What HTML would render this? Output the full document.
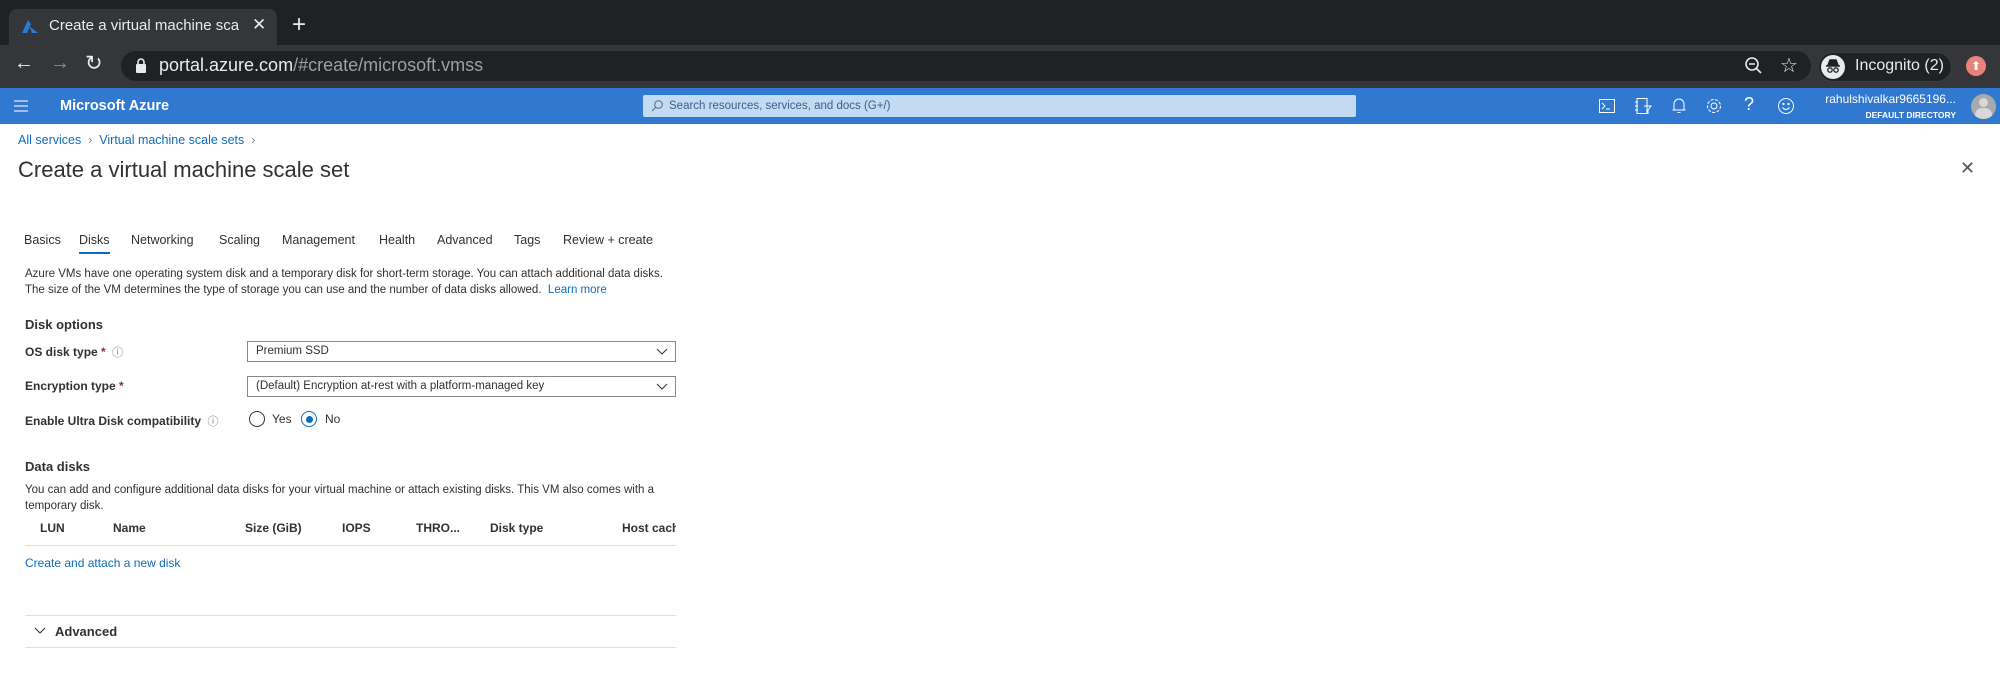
<!DOCTYPE html>
<html><head><meta charset="utf-8"><style>
*{margin:0;padding:0;box-sizing:border-box}
body{width:2000px;height:697px;overflow:hidden;background:#fff;font-family:"Liberation Sans",sans-serif;position:relative;color:#323130}
.a{position:absolute;white-space:nowrap}
.t{font-size:12px;line-height:14px}
.lbl{font-size:12px;font-weight:bold;color:#323130}
.blue{color:#0f6cbd}
.dd{position:absolute;left:247px;width:429px;height:21px;border:1px solid #8a8886;font-size:11.5px;padding:0 8px;line-height:19px}
.dd svg{position:absolute;right:7px;top:6px}
.hic{position:absolute;top:97px}
.line{position:absolute;left:25px;width:651px;height:1px;background:#e1dfdd}
</style></head><body>
<!-- chrome -->
<div class="a" style="left:0;top:0;width:2000px;height:45px;background:#202124"></div>
<div class="a" style="left:9px;top:9px;width:268px;height:38px;background:#35363a;border-radius:8px 8px 0 0"></div>
<svg class="a" style="left:22px;top:20px" width="16" height="14"><path d="M6 0L0 13h5L9 4z M7 6l3 7h6z" fill="#2a7bd6"/></svg>
<div class="a" style="left:49px;top:17px;font-size:15px;color:#e8eaed;width:190px;overflow:hidden">Create a virtual machine scale set</div>
<div class="a" style="left:252px;top:15px;font-size:17px;color:#e8eaed">✕</div>
<div class="a" style="left:292px;top:11px;font-size:24px;color:#e8eaed">+</div>
<div class="a" style="left:0;top:45px;width:2000px;height:43px;background:#35363a"></div>
<div class="a" style="left:14px;top:52px;font-size:20px;color:#e8eaed">←</div>
<div class="a" style="left:50px;top:52px;font-size:20px;color:#8a8b8d">→</div>
<div class="a" style="left:85px;top:51px;font-size:21px;color:#e8eaed">↻</div>
<div class="a" style="left:121px;top:51px;width:1690px;height:30px;background:#202124;border-radius:15px"></div>
<svg class="a" style="left:135px;top:58px" width="12" height="15"><rect x="1" y="6" width="10" height="9" rx="1" fill="#e8eaed"/><path d="M3 7V4a3 3 0 0 1 6 0v3" stroke="#e8eaed" stroke-width="1.6" fill="none"/></svg>
<div class="a" style="left:159px;top:55px;font-size:18px;color:#e8eaed">portal.azure.com<span style="color:#9aa0a6">/#create/microsoft.vmss</span></div>
<svg class="a" style="left:1745px;top:57px" width="18" height="18"><circle cx="7" cy="7" r="6" stroke="#e8eaed" stroke-width="1.6" fill="none"/><path d="M11 11l5 5M4 7h6" stroke="#e8eaed" stroke-width="1.6"/></svg>
<div class="a" style="left:1780px;top:53px;font-size:20px;color:#e8eaed">☆</div>
<div class="a" style="left:1818px;top:52px;width:134px;height:30px;border-radius:15px;background:#202124;border:1px solid #3c3d40"></div>
<svg class="a" style="left:1821px;top:55px" width="24" height="24"><circle cx="12" cy="12" r="12" fill="#e8eaed"/><path d="M7 10l2-5h6l2 5zM5 11h14" stroke="#202124" stroke-width="1.4" fill="#202124"/><circle cx="9" cy="15" r="2.2" stroke="#202124" stroke-width="1.3" fill="none"/><circle cx="15" cy="15" r="2.2" stroke="#202124" stroke-width="1.3" fill="none"/></svg>
<div class="a" style="left:1855px;top:57px;font-size:16px;color:#e8eaed">Incognito (2)</div>
<div class="a" style="left:1966px;top:56px;width:20px;height:20px;border-radius:10px;background:#e8837a;color:#fff;font-size:12px;text-align:center;line-height:20px">⬆</div>
<!-- azure header -->
<div class="a" style="left:0;top:88px;width:2000px;height:36px;background:#3178d0"></div>
<svg class="a" style="left:14px;top:100px" width="14" height="12"><path d="M0 1h14M0 6h14M0 11h14" stroke="#dce8f7" stroke-width="1.3"/></svg>
<div class="a" style="left:60px;top:98px;font-size:14.5px;color:#fff;font-weight:bold">Microsoft Azure</div>
<div class="a" style="left:643px;top:95px;width:713px;height:22px;background:#c3daf2;border-radius:2px"></div>
<svg class="a" style="left:651px;top:100px" width="12" height="12"><circle cx="7.5" cy="4.5" r="3.8" stroke="#4a6a90" fill="none"/><path d="M5 7L1 11" stroke="#4a6a90"/></svg>
<div class="a" style="left:669px;top:100px;font-size:11.5px;color:#3a5f8a">Search resources, services, and docs (G+/)</div>
<svg class="hic" style="left:1598px" width="18" height="18" fill="none" stroke="#fff"><rect x="1.5" y="2.5" width="15" height="13"/><path d="M4 6l3 3-3 3M8 12h4"/></svg>
<svg class="hic" style="left:1634px" width="18" height="18" fill="none" stroke="#fff"><rect x="3" y="1.5" width="10" height="15"/><path d="M1 5h3M1 9h3M1 13h3M10 9h7l-3 4v4"/></svg>
<svg class="hic" style="left:1670px" width="18" height="18" fill="none" stroke="#fff"><path d="M4 13V7a5 5 0 0 1 10 0v6h1.5H2.5zM7.5 15.5h3"/></svg>
<svg class="hic" style="left:1705px" width="18" height="18" fill="none" stroke="#fff"><circle cx="9" cy="9" r="3"/><circle cx="9" cy="9" r="6.5" stroke-dasharray="3 1.5"/></svg>
<div class="a" style="left:1744px;top:94px;font-size:18px;color:#fff">?</div>
<svg class="hic" style="left:1777px" width="18" height="18" fill="none" stroke="#fff"><circle cx="9" cy="9" r="7.5"/><path d="M5.5 10.5q3.5 4 7 0"/><circle cx="6.5" cy="7" r=".6" fill="#fff"/><circle cx="11.5" cy="7" r=".6" fill="#fff"/></svg>
<div class="a" style="right:44px;top:92px;font-size:12px;color:#fff;text-align:right">rahulshivalkar9665196...</div>
<div class="a" style="right:44px;top:110px;font-size:8.5px;color:#fff;font-weight:bold">DEFAULT DIRECTORY</div>
<div class="a" style="left:1971px;top:94px;width:25px;height:25px;border-radius:13px;background:#a8a9ab;overflow:hidden"><div style="position:absolute;left:8px;top:4px;width:9px;height:9px;border-radius:5px;background:#d8d8d8"></div><div style="position:absolute;left:4px;top:14px;width:17px;height:14px;border-radius:8px;background:#d8d8d8"></div></div>
<!-- content -->
<div class="a t blue" style="left:18px;top:133px;font-size:12.5px">All services <span style="color:#888">&nbsp;›&nbsp;</span> Virtual machine scale sets <span style="color:#888">&nbsp;›</span></div>
<div class="a" style="left:18px;top:157px;font-size:22px;color:#323130">Create a virtual machine scale set</div>
<div class="a" style="left:1960px;top:158px;font-size:18px;color:#555">✕</div>
<div class="a t" style="left:24px;top:233px;font-size:12.5px">Basics</div>
<div class="a t" style="left:79px;top:233px;font-size:12.5px">Disks</div>
<div class="a" style="left:79px;top:252px;width:31px;height:2px;background:#0f6cbd"></div>
<div class="a t" style="left:131px;top:233px;font-size:12.5px">Networking</div>
<div class="a t" style="left:219px;top:233px;font-size:12.5px">Scaling</div>
<div class="a t" style="left:282px;top:233px;font-size:12.5px">Management</div>
<div class="a t" style="left:379px;top:233px;font-size:12.5px">Health</div>
<div class="a t" style="left:437px;top:233px;font-size:12.5px">Advanced</div>
<div class="a t" style="left:514px;top:233px;font-size:12.5px">Tags</div>
<div class="a t" style="left:563px;top:233px;font-size:12.5px">Review + create</div>
<div class="a t" style="left:25px;top:267px;font-size:11.5px;line-height:15.5px;white-space:normal;width:660px">Azure VMs have one operating system disk and a temporary disk for short-term storage. You can attach additional data disks. The size of the VM determines the type of storage you can use and the number of data disks allowed. &nbsp;<span class="blue">Learn more</span></div>
<div class="a" style="left:25px;top:317px;font-size:13px;font-weight:bold">Disk options</div>
<div class="a lbl" style="left:25px;top:344px">OS disk type <span style="color:#a4262c">*</span> <span style="font-weight:normal;color:#777;font-size:11px">&nbsp;ⓘ</span></div>
<div class="dd" style="top:341px">Premium SSD<svg width="12" height="8"><path d="M1 1l5 5 5-5" stroke="#333" fill="none"/></svg></div>
<div class="a lbl" style="left:25px;top:379px">Encryption type <span style="color:#a4262c">*</span></div>
<div class="dd" style="top:376px">(Default) Encryption at-rest with a platform-managed key<svg width="12" height="8"><path d="M1 1l5 5 5-5" stroke="#333" fill="none"/></svg></div>
<div class="a lbl" style="left:25px;top:413px">Enable Ultra Disk compatibility <span style="font-weight:normal;color:#777;font-size:11px">&nbsp;ⓘ</span></div>
<div class="a" style="left:249px;top:411px;width:16px;height:16px;border:1px solid #323130;border-radius:8px"></div>
<div class="a t" style="left:272px;top:412px">Yes</div>
<div class="a" style="left:301px;top:411px;width:16px;height:16px;border:1px solid #0f6cbd;border-radius:8px"><div style="position:absolute;left:3.5px;top:3.5px;width:7px;height:7px;border-radius:4px;background:#0f6cbd"></div></div>
<div class="a t" style="left:325px;top:412px">No</div>
<div class="a" style="left:25px;top:459px;font-size:13px;font-weight:bold">Data disks</div>
<div class="a t" style="left:25px;top:483px;font-size:11.5px;line-height:15.5px;white-space:normal;width:660px">You can add and configure additional data disks for your virtual machine or attach existing disks. This VM also comes with a temporary disk.</div>
<div class="a lbl" style="left:40px;top:521px">LUN</div>
<div class="a lbl" style="left:113px;top:521px">Name</div>
<div class="a lbl" style="left:245px;top:521px">Size (GiB)</div>
<div class="a lbl" style="left:342px;top:521px">IOPS</div>
<div class="a lbl" style="left:416px;top:521px">THRO...</div>
<div class="a lbl" style="left:490px;top:521px">Disk type</div>
<div class="a lbl" style="left:622px;top:521px;width:54px;overflow:hidden">Host caching</div>
<div class="line" style="top:545px"></div>
<div class="a t blue" style="left:25px;top:556px;font-size:12px">Create and attach a new disk</div>
<div class="line" style="top:615px"></div>
<svg class="a" style="left:34px;top:627px" width="12" height="8"><path d="M1 1l5 5 5-5" stroke="#333" fill="none"/></svg>
<div class="a" style="left:55px;top:624px;font-size:13px;font-weight:bold">Advanced</div>
<div class="line" style="top:647px"></div>
</body></html>
